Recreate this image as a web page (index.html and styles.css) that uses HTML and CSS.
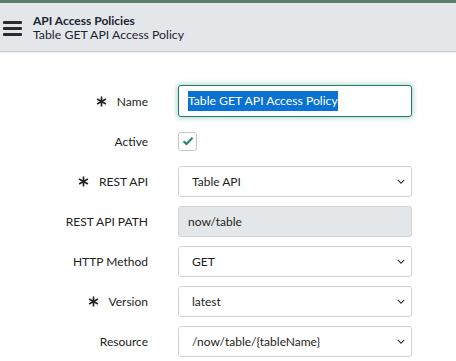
FILE: index.html
```html
<!DOCTYPE html>
<html>
<head>
  <title>Table GET API Access Policy</title>
  <link rel="stylesheet" href="styles.css">
</head>
<body>
  <div class="topbar"></div>
  <header class="form-header">
    <div class="menu-icon">
      <span></span><span></span><span></span>
    </div>
    <div class="titles">
      <div class="title">API Access Policies</div>
      <div class="subtitle">Table GET API Access Policy</div>
    </div>
  </header>

  <form class="form">
    <div class="row">
      <label class="label mandatory">
        <svg class="req" viewBox="0 0 12 12"><path d="M6 0.5V11.5M1.2 3.2L10.8 8.8M10.8 3.2L1.2 8.8"/></svg>
        Name
      </label>
      <div class="field focused"><span class="selected">Table GET API Access Policy</span></div>
    </div>
    <div class="row">
      <label class="label">Active</label>
      <div class="check">
        <svg viewBox="0 0 12 10"><path d="M1.5 5.2L4.5 8L10.5 1.8"/></svg>
      </div>
    </div>
    <div class="row">
      <label class="label mandatory">
        <svg class="req" viewBox="0 0 12 12"><path d="M6 0.5V11.5M1.2 3.2L10.8 8.8M10.8 3.2L1.2 8.8"/></svg>
        REST API
      </label>
      <div class="field select"><span>Table API</span><svg class="chev" viewBox="0 0 10 6"><path d="M1 1L5 5L9 1"/></svg></div>
    </div>
    <div class="row">
      <label class="label">REST API PATH</label>
      <div class="field readonly"><span>now/table</span></div>
    </div>
    <div class="row">
      <label class="label">HTTP Method</label>
      <div class="field select"><span>GET</span><svg class="chev" viewBox="0 0 10 6"><path d="M1 1L5 5L9 1"/></svg></div>
    </div>
    <div class="row">
      <label class="label mandatory">
        <svg class="req" viewBox="0 0 12 12"><path d="M6 0.5V11.5M1.2 3.2L10.8 8.8M10.8 3.2L1.2 8.8"/></svg>
        Version
      </label>
      <div class="field select"><span>latest</span><svg class="chev" viewBox="0 0 10 6"><path d="M1 1L5 5L9 1"/></svg></div>
    </div>
    <div class="row">
      <label class="label">Resource</label>
      <div class="field select"><span>/now/table/{tableName}</span><svg class="chev" viewBox="0 0 10 6"><path d="M1 1L5 5L9 1"/></svg></div>
    </div>
  </form>
</body>
</html>
```

FILE: styles.css
```css
* { margin: 0; padding: 0; box-sizing: border-box; }
body {
  font-family: 'Lato', 'Liberation Sans', sans-serif;
  background: #fff;
  color: #222;
  font-size: 12px;
}
.topbar {
  height: 3px;
  background: #5b7f6d;
}
.form-header {
  display: flex;
  align-items: center;
  height: 49px;
  background: #e4e7ea;
  border-bottom: 1px solid #c9cbcd;
  box-shadow: 0 1px 1px rgba(0, 0, 0, 0.06);
  padding-left: 3px;
}
.menu-icon {
  display: flex;
  flex-direction: column;
  gap: 3px;
  width: 19px;
  margin-right: 11px;
  margin-top: 3px;
}
.menu-icon span {
  display: block;
  height: 3px;
  background: #2b2b2b;
  border-radius: 1px;
}
.titles {
  line-height: 14px;
  color: #1a2533;
  margin-top: 1px;
}
.title { font-weight: bold; font-size: 12px; }
.subtitle { font-size: 12.3px; }

.form {
  display: flex;
  flex-direction: column;
  gap: 8px;
  padding-top: 33px;
}
.row {
  display: grid;
  grid-template-columns: 148px 234px;
  column-gap: 30px;
  align-items: center;
  height: 32px;
}
.label {
  display: flex;
  align-items: center;
  justify-content: flex-end;
  gap: 10px;
  color: #222;
}
.req {
  width: 11px;
  height: 11px;
  fill: none;
  stroke: #222;
  stroke-width: 1.8;
}
.field {
  display: flex;
  align-items: center;
  height: 31px;
  border: 1px solid #cfd3d6;
  border-radius: 3px;
  padding: 0 9px;
  background: #fff;
  color: #1d1d1d;
}
.field.focused {
  height: 32px;
  border-color: #23796a;
  box-shadow: 0 0 5px 1px rgba(62, 160, 132, 0.45);
}
.selected {
  background: #0a72d2;
  color: #fff;
  line-height: 20px;
  font-size: 12.2px;
}
.field.readonly {
  background: #e4e7ea;
  border-color: #cfd3d6;
}
.field.select {
  justify-content: space-between;
  padding: 0 6px 0 13px;
}
.chev {
  width: 8px;
  height: 5px;
  fill: none;
  stroke: #333;
  stroke-width: 1.5;
}
.check {
  width: 19px;
  height: 19px;
  border: 1px solid #c4c7ca;
  border-radius: 3px;
  display: flex;
  align-items: center;
  justify-content: center;
}
.check svg {
  width: 12px;
  height: 10px;
  fill: none;
  stroke: #2a8580;
  stroke-width: 2.2;
}
```
